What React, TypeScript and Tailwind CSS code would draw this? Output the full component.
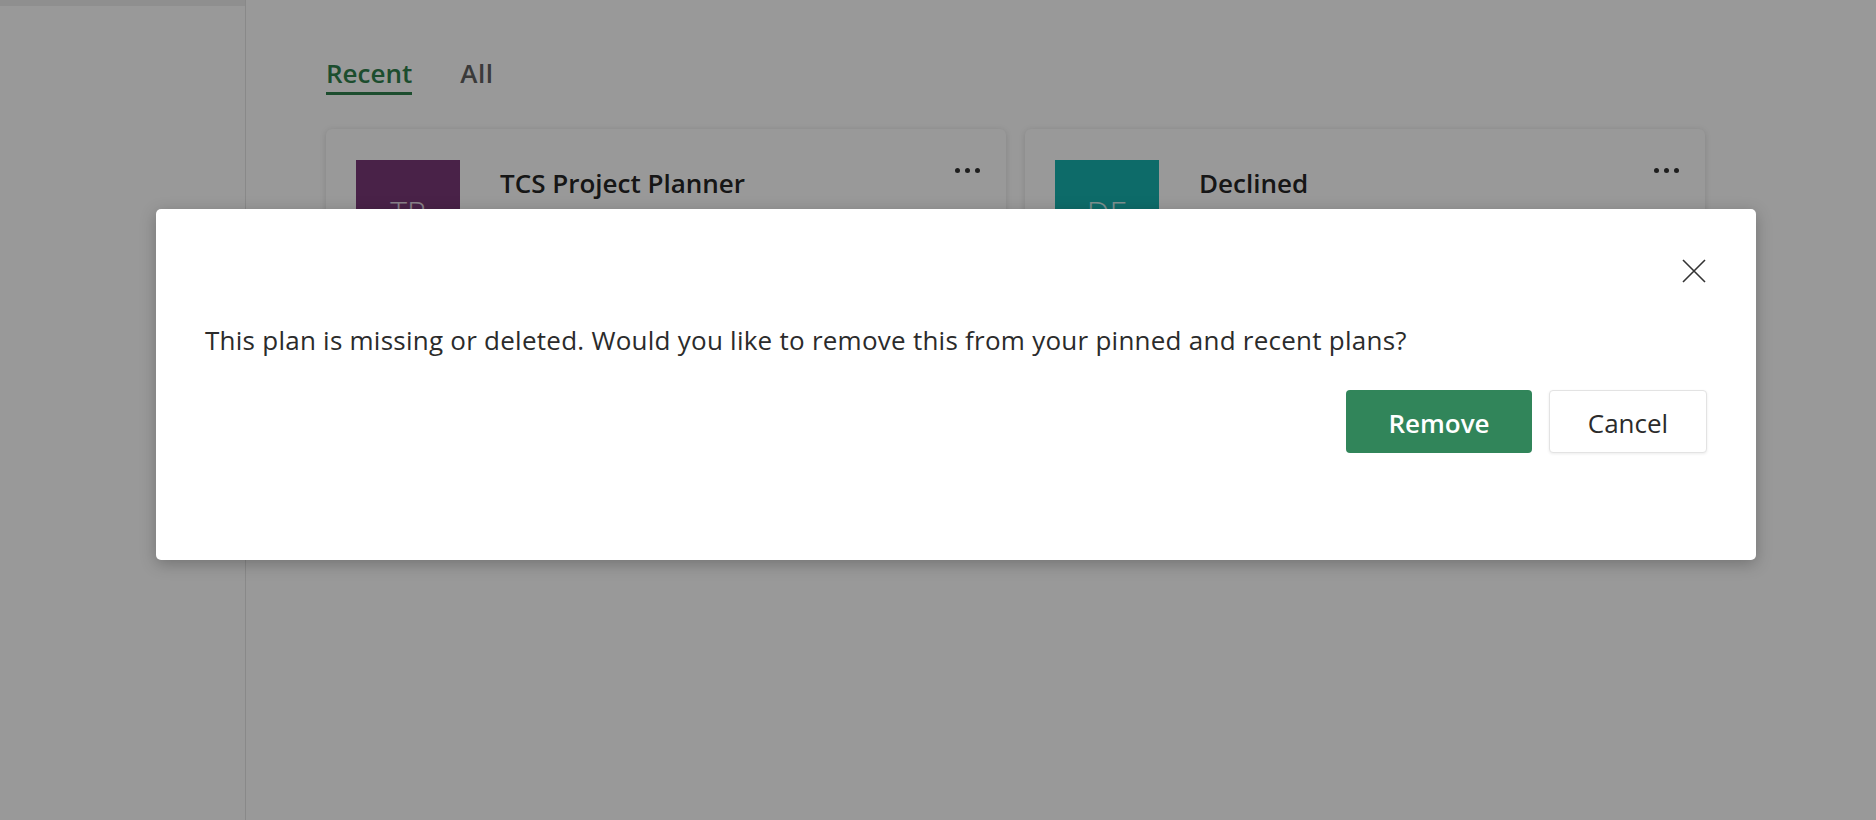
type Plan = {
  initials: string;
  name: string;
  color: string;
};

const plans: Plan[] = [
  { initials: "TP", name: "TCS Project Planner", color: "bg-[#7b3978]" },
  { initials: "DE", name: "Declined", color: "bg-[#17b2af]" },
];

function PlanCard({ plan }: { plan: Plan }) {
  return (
    <div className="relative flex h-[240px] w-[680px] items-start rounded-[6px] bg-white pl-[30px] pt-[31px] shadow-[0_1px_6px_rgba(0,0,0,0.14)]">
      <div
        className={`flex h-[104px] w-[104px] shrink-0 items-center justify-center text-[32px] font-light text-white/80 ${plan.color}`}
      >
        {plan.initials}
      </div>
      <h2 className="ml-[40px] mt-[5px] text-[26px] font-semibold leading-[36px] text-[#252525]">{plan.name}</h2>
      <button className="absolute right-[26px] top-[39px] flex items-center gap-[5px]">
        <span className="h-[5px] w-[5px] rounded-full bg-[#333]" />
        <span className="h-[5px] w-[5px] rounded-full bg-[#333]" />
        <span className="h-[5px] w-[5px] rounded-full bg-[#333]" />
      </button>
    </div>
  );
}

export default function App() {
  return (
    <div className="relative flex h-[820px] w-[1876px] overflow-hidden bg-white font-['Open_Sans',sans-serif]">
      <aside className="flex w-[246px] shrink-0 flex-col border-r border-[#e4e4e4]">
        <div className="h-[6px] bg-[#eeeeee]" />
      </aside>

      <main className="flex flex-1 flex-col pl-[80px] pt-[55px]">
        <nav className="flex items-start gap-[48px]">
          <button className="flex flex-col items-stretch">
            <span className="text-[26px] font-semibold leading-[36px] text-[#30804d]">Recent</span>
            <span className="mt-[1px] h-[3px] bg-[#30804d]" />
          </button>
          <button className="text-[26px] font-semibold leading-[36px] tracking-[0.5px] text-[#616161]">All</button>
        </nav>

        <section className="mt-[34px] flex gap-[19px]">
          {plans.map((p) => (
            <PlanCard key={p.name} plan={p} />
          ))}
        </section>
      </main>

      <div className="absolute inset-0 bg-black/40" />

      <div className="absolute left-[156px] top-[209px] flex h-[351px] w-[1600px] flex-col rounded-[5px] bg-white px-[49px] pt-[50px] shadow-[0_4px_16px_rgba(0,0,0,0.25)]">
        <div className="flex justify-end pr-[1px]">
          <button className="flex h-[24px] w-[24px] items-center justify-center text-[#333]">
            <svg width="24" height="24" viewBox="0 0 24 24" fill="none" stroke="currentColor" strokeWidth="1.6">
              <path d="M1 1L23 23M23 1L1 23" />
            </svg>
          </button>
        </div>
        <p className="mt-[41px] text-[26px] leading-[32px] tracking-[0.25px] text-[#2b2b2b]">
          This plan is missing or deleted. Would you like to remove this from your pinned and recent plans?
        </p>
        <div className="mt-[34px] flex justify-end gap-[17px]">
          <button className="h-[63px] w-[186px] rounded-[4px] bg-[#31855a] pt-[3px] text-[26px] font-semibold text-white">
            Remove
          </button>
          <button className="h-[63px] w-[158px] rounded-[4px] border border-[#e3e3e3] bg-white pt-[3px] text-[26px] text-[#2b2b2b] shadow-[0_1px_3px_rgba(0,0,0,0.08)]">
            Cancel
          </button>
        </div>
      </div>
    </div>
  );
}
